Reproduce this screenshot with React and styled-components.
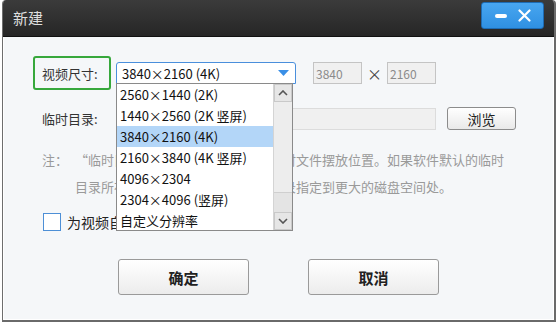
import styled, { createGlobalStyle } from "styled-components";

const GlobalStyle = createGlobalStyle`
  html, body {
    margin: 0;
    padding: 0;
    background: #ffffff;
  }
  body {
    font-family: "Noto Sans CJK SC", "Noto Sans", sans-serif;
    font-size: 13px;
    color: #222;
  }
`

const sizes = [
    "2560×1440 (2K)",
    "1440×2560 (2K 竖屏)",
    "3840×2160 (4K)",
    "2160×3840 (4K 竖屏)",
    "4096×2304",
    "2304×4096 (竖屏)",
    "自定义分辨率",
]

function App() {
    return (
        <>
            <GlobalStyle/>
            <Window>
                <TitleBar>
                    <Title>新建</Title>
                    <WinButtons>
                        <svg width="14" height="6" viewBox="0 0 14 6">
                            <rect x="1" y="1" width="12" height="4" rx="2" fill="#fff"/>
                        </svg>
                        <svg width="13" height="13" viewBox="0 0 13 13">
                            <path d="M1.5 1.5 L11.5 11.5 M11.5 1.5 L1.5 11.5" stroke="#fff" strokeWidth="2.2"
                                  strokeLinecap="round"/>
                        </svg>
                    </WinButtons>
                </TitleBar>
                <Body>
                    <Row>
                        <FieldLabel $framed>视频尺寸:</FieldLabel>
                        <ComboWrap>
                            <Combo>
                                <span>3840×2160 (4K)</span>
                                <svg width="11" height="6" viewBox="0 0 11 6">
                                    <path d="M0 0 H11 L5.5 6 Z" fill="#3a8fe6"/>
                                </svg>
                            </Combo>
                            <DropList>
                                <Items>
                                    {sizes.map((s, i) => (
                                        <Item key={s} $selected={i === 2}>{s}</Item>
                                    ))}
                                </Items>
                                <ScrollBar>
                                    <ScrollBtn>
                                        <svg width="10" height="6" viewBox="0 0 10 6">
                                            <path d="M1 5 L5 1 L9 5" stroke="#555" strokeWidth="1.6" fill="none"/>
                                        </svg>
                                    </ScrollBtn>
                                    <Thumb/>
                                    <Track/>
                                    <ScrollBtn>
                                        <svg width="10" height="6" viewBox="0 0 10 6">
                                            <path d="M1 1 L5 5 L9 1" stroke="#555" strokeWidth="1.6" fill="none"/>
                                        </svg>
                                    </ScrollBtn>
                                </ScrollBar>
                            </DropList>
                        </ComboWrap>
                        <SizeBox>3840</SizeBox>
                        <Times>×</Times>
                        <SizeBox>2160</SizeBox>
                    </Row>
                    <Row $top={17}>
                        <FieldLabel>临时目录:</FieldLabel>
                        <PathInput/>
                        <SmallButton>浏览</SmallButton>
                    </Row>
                    <Note>
                        <NoteHead>注：</NoteHead>
                        <NoteText>
                            “临时目录”是软件处理视频时的临时文件摆放位置。如果软件默认的临时目录所在磁盘空间不足，请将临时目录指定到更大的磁盘空间处。
                        </NoteText>
                    </Note>
                    <CheckRow>
                        <CheckBox/>
                        <span>为视频自动创建同名文件夹</span>
                    </CheckRow>
                    <Actions>
                        <ActionButton>确定</ActionButton>
                        <ActionButton>取消</ActionButton>
                    </Actions>
                </Body>
            </Window>
        </>
    )
}


const Window = styled.div`
  width: 554px;
  height: 322px;
  margin-left: 2px;
  display: flex;
  flex-direction: column;
  box-sizing: border-box;
  border-left: 1px solid #6e6e6e;
  border-right: 2px solid #6a6a6a;
  border-bottom: 2px solid #6a6a6a;
  border-radius: 4px 4px 0 0;
  overflow: hidden;
`

const TitleBar = styled.div`
  height: 36px;
  flex: none;
  display: flex;
  align-items: flex-start;
  justify-content: space-between;
  background: linear-gradient(#3b3b3b, #262626);
  border-bottom: 1px solid #111;
`

const Title = styled.div`
  color: #dedede;
  font-size: 15px;
  line-height: 36px;
  padding-left: 10px;
`

const WinButtons = styled.div`
  margin: 2px 10px 0 0;
  width: 63px;
  height: 27px;
  box-sizing: border-box;
  display: flex;
  align-items: center;
  justify-content: space-between;
  padding: 0 12px 0 12px;
  background: linear-gradient(#48a6f0, #2f90e2);
  border: 1px solid #1d6bb3;
  border-radius: 3px;
`

const Body = styled.div`
  flex: 1;
  background: #f5f7f9;
  border-left: 1px solid #fff;
  border-right: 1px solid #fff;
  border-bottom: 1px solid #fff;
  padding: 19px 0 0 29px;
  display: flex;
  flex-direction: column;
`

const Row = styled.div`
  display: flex;
  align-items: center;
  margin-top: ${p => p.$top || 0}px;
`

const FieldLabel = styled.div`
  width: 78px;
  height: ${p => p.$framed ? 34 : 23}px;
  box-sizing: border-box;
  display: flex;
  align-items: center;
  padding-left: 7px;
  border: 2px solid ${p => p.$framed ? "#37a83c" : "transparent"};
  border-radius: 3px;
  color: #333;
  font-size: 13px;
`

const ComboWrap = styled.div`
  position: relative;
  margin-left: 5px;
`

const Combo = styled.div`
  width: 180px;
  height: 22px;
  box-sizing: border-box;
  display: flex;
  align-items: center;
  justify-content: space-between;
  padding: 0 6px 0 5px;
  background: #fff;
  border: 1px solid #4a8fdc;
  border-radius: 3px 3px 0 0;
  font-size: 13px;
  color: #111;
`

const DropList = styled.div`
  position: absolute;
  left: 0;
  top: 21px;
  width: 177px;
  height: 148px;
  box-sizing: border-box;
  display: flex;
  background: #fff;
  border: 1px solid #8a8a8a;
  z-index: 2;
`

const Items = styled.div`
  flex: 1;
  display: flex;
  flex-direction: column;
`

const Item = styled.div`
  height: 21px;
  line-height: 21px;
  padding-left: 3px;
  font-size: 13px;
  color: #111;
  white-space: nowrap;
  background: ${p => p.$selected ? "#b3d6f8" : "transparent"};
`

const ScrollBar = styled.div`
  width: 18px;
  display: flex;
  flex-direction: column;
  background: #ececec;
  border-left: 1px solid #d4d4d4;
`

const ScrollBtn = styled.div`
  height: 18px;
  box-sizing: border-box;
  display: flex;
  align-items: center;
  justify-content: center;
  background: #e6e6e6;
  border: 1px solid #c9c9c9;
`

const Thumb = styled.div`
  flex: 1;
  background: #ededed;
`

const Track = styled.div`
  height: 19px;
  background: #e4e4e4;
  border-top: 1px solid #cfcfcf;
`

const SizeBox = styled.div`
  width: 49px;
  height: 22px;
  box-sizing: border-box;
  margin-left: 17px;
  padding-left: 2px;
  display: flex;
  align-items: center;
  background: #f0f0f0;
  border: 1px solid #c4c4c4;
  color: #8a8a8a;
  font-size: 12px;

  & + span + & {
    margin-left: 0;
  }
`

const Times = styled.span`
  width: 25px;
  text-align: center;
  color: #444;
  font-size: 15px;
`

const PathInput = styled.div`
  margin-left: 5px;
  width: 320px;
  height: 22px;
  box-sizing: border-box;
  background: #f0f0f0;
  border: 1px solid #dcdcdc;
`

const SmallButton = styled.div`
  margin-left: 11px;
  width: 69px;
  height: 23px;
  box-sizing: border-box;
  display: flex;
  align-items: center;
  justify-content: center;
  border: 1px solid #8c8c8c;
  border-radius: 3px;
  background: linear-gradient(#ffffff, #e9e9e9);
  font-size: 14px;
  color: #222;
`

const Note = styled.div`
  display: flex;
  margin-top: 16px;
  padding-left: 9px;
  color: #9a9a9a;
  font-size: 13px;
  line-height: 27px;
`

const NoteHead = styled.div`
  width: 33px;
  flex: none;
`

const NoteText = styled.div`
  width: 440px;
`

const CheckRow = styled.div`
  display: flex;
  align-items: center;
  margin-top: 12px;
  padding-left: 10px;
  font-size: 14px;
  color: #222;
`

const CheckBox = styled.div`
  width: 18px;
  height: 18px;
  box-sizing: border-box;
  margin-right: 6px;
  background: #fff;
  border: 1px solid #4d8fd6;
`

const Actions = styled.div`
  display: flex;
  gap: 59px;
  margin-top: 27px;
  padding-left: 85px;
`

const ActionButton = styled.div`
  width: 131px;
  height: 36px;
  box-sizing: border-box;
  display: flex;
  align-items: center;
  justify-content: center;
  border: 1px solid #9a9a9a;
  border-radius: 3px;
  background: linear-gradient(#ffffff, #ececec);
  font-size: 15px;
  font-weight: bold;
  color: #222;
`


export default App;
